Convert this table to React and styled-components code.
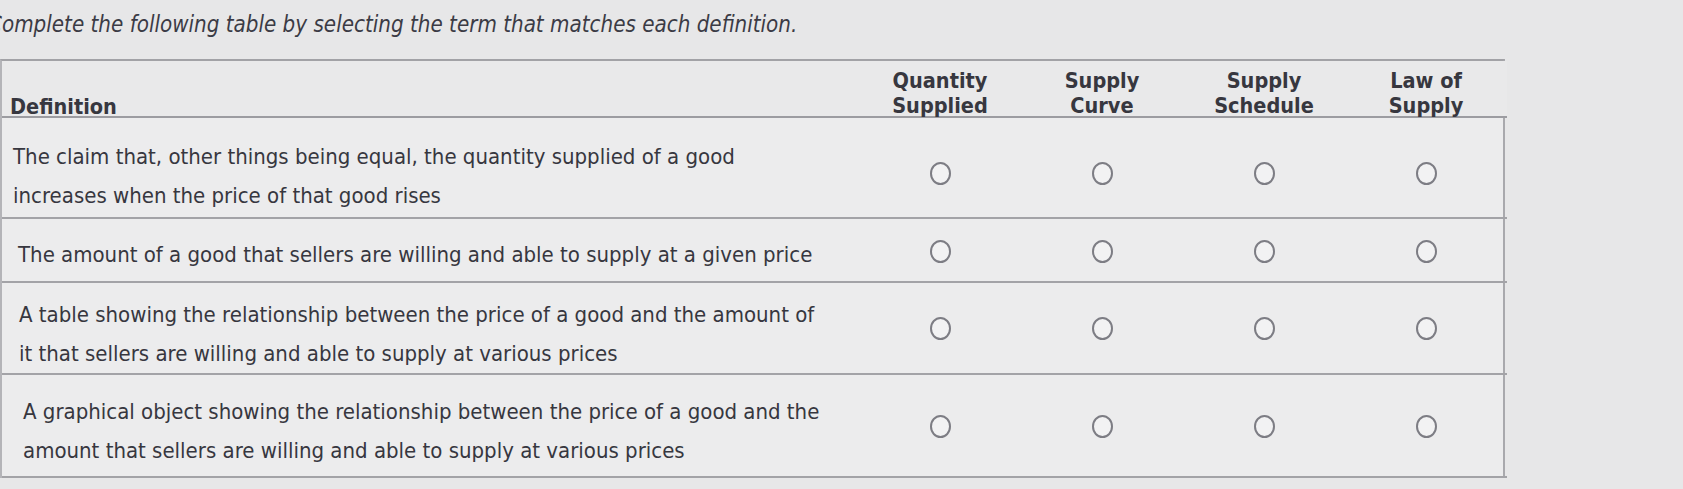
import React from "react";
import styled, {createGlobalStyle} from "styled-components";

const GlobalStyle = createGlobalStyle`
  html, body {
    margin: 0;
    padding: 0;
    background: #e7e7e8;
  }
  body {
    font-family: "DejaVu Sans Condensed", "DejaVu Sans", Verdana, sans-serif;
    color: #37373f;
    overflow: hidden;
  }
`;

const Page = styled.div`
  width: 1683px;
  height: 489px;
  padding-top: 10px;
  box-sizing: border-box;
`;

const Title = styled.div`
  margin-left: -12px;
  font-size: 22.2px;
  font-style: italic;
  line-height: 28px;
  color: #3b3b45;
  white-space: nowrap;
`;

const Table = styled.div`
  margin-top: 21px;
  width: 1505px;
  display: grid;
  grid-template-columns: 857px repeat(4, 162px);
  background: #ececed;
  border-top: 2px solid #a2a2a6;
  border-right: 2px solid #a9a9ad;
  border-left: 2px solid #b4b4b8;
  box-sizing: border-box;
`;

const HeadCell = styled.div`
  height: 57px;
  display: flex;
  align-items: flex-end;
  justify-content: ${p => (p.$left ? "flex-start" : "center")};
  padding: 0 ${p => (p.$left ? "8px" : "0")};
  text-align: center;
  font-weight: bold;
  font-size: 21.5px;
  line-height: 25px;
  border-bottom: 2px solid #9c9ca1;
  box-sizing: border-box;
  background: #e9e9ea;
`;

const HeadLabel = styled.span`
  margin-bottom: ${p => p.$drop}px;
`;

const DefCell = styled.div`
  height: ${p => p.$h}px;
  padding: ${p => p.$pt}px 8px 0 ${p => p.$pl}px;
  font-size: 22px;
  line-height: 39px;
  white-space: nowrap;
  border-bottom: 2px solid #a3a3a7;
  box-sizing: border-box;
`;

const RadioCell = styled.div`
  height: ${p => p.$h}px;
  display: flex;
  align-items: center;
  justify-content: center;
  padding-top: ${p => p.$off}px;
  border-bottom: 2px solid #a3a3a7;
  box-sizing: border-box;
`;

const Radio = styled.span`
  display: block;
  width: 17px;
  height: 19px;
  border: 2px solid #7d7d84;
  border-radius: 50%;
  background: #f2f2f3;
`;

const columns = [
  ["Quantity", "Supplied"],
  ["Supply", "Curve"],
  ["Supply", "Schedule"],
  ["Law of", "Supply"],
];

const rows = [
  {
    text: ["The claim that, other things being equal, the quantity supplied of a good", "increases when the price of that good rises"],
    h: 101,
    pt: 19,
    pl: 11,
    off: 12,
  },
  {
    text: ["The amount of a good that sellers are willing and able to supply at a given price"],
    h: 64,
    pt: 16,
    pl: 16,
    off: 3,
  },
  {
    text: ["A table showing the relationship between the price of a good and the amount of", "it that sellers are willing and able to supply at various prices"],
    h: 92,
    pt: 12,
    pl: 17,
    off: 0,
  },
  {
    text: ["A graphical object showing the relationship between the price of a good and the", "amount that sellers are willing and able to supply at various prices"],
    h: 103,
    pt: 17,
    pl: 21,
    off: 2,
  },
];

export default function App() {
  return (
    <>
      <GlobalStyle/>
      <Page>
        <Title>Complete the following table by selecting the term that matches each definition.</Title>
        <Table>
          <HeadCell $left>
            <HeadLabel $drop={-3}>Definition</HeadLabel>
          </HeadCell>
          {columns.map((c, i) => (
            <HeadCell key={i}>
              <HeadLabel $drop={-2}>
                {c[0]}<br/>{c[1]}
              </HeadLabel>
            </HeadCell>
          ))}
          {rows.map((r, i) => (
            <React.Fragment key={i}>
              <DefCell $h={r.h} $pt={r.pt} $pl={r.pl}>
                {r.text.map((t, j) => (
                  <div key={j}>{t}</div>
                ))}
              </DefCell>
              {columns.map((c, j) => (
                <RadioCell key={j} $h={r.h} $off={r.off}>
                  <Radio/>
                </RadioCell>
              ))}
            </React.Fragment>
          ))}
        </Table>
      </Page>
    </>
  );
}
